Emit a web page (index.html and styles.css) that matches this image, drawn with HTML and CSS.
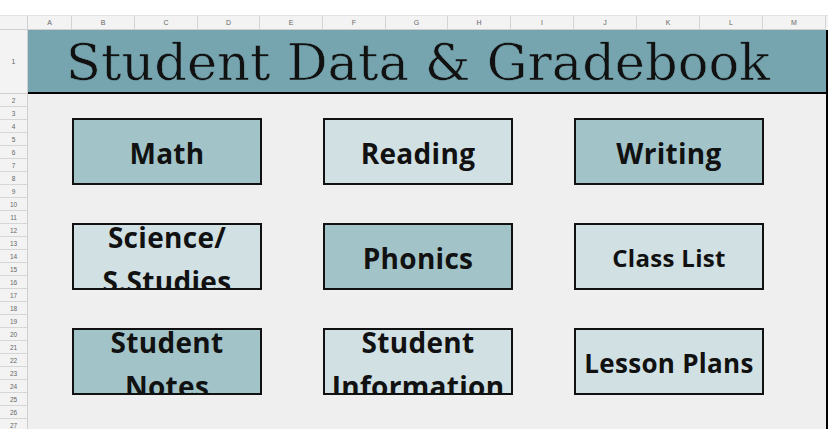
FILE: index.html
```html
<!DOCTYPE html>
<html>
<head>
<meta charset="utf-8">
<link rel="stylesheet" href="styles.css">
</head>
<body>
<div class="top-strip"></div>
<div class="sheet">
  <div class="col-headers">
    <div class="corner"></div>
    <div class="ch ca">A</div>
    <div class="ch">B</div>
    <div class="ch">C</div>
    <div class="ch cn">D</div>
    <div class="ch">E</div>
    <div class="ch">F</div>
    <div class="ch cn">G</div>
    <div class="ch">H</div>
    <div class="ch">I</div>
    <div class="ch">J</div>
    <div class="ch">K</div>
    <div class="ch">L</div>
    <div class="ch">M</div>
  </div>
  <div class="title-row">
    <div class="rh rh-title">1</div>
    <div class="title-cell"><span class="title-text">Student Data &amp; Gradebook</span></div>
  </div>
  <div class="body-row">
    <div class="row-nums">
      <div class="rn">2</div><div class="rn">3</div><div class="rn">4</div><div class="rn">5</div>
      <div class="rn">6</div><div class="rn">7</div><div class="rn">8</div><div class="rn">9</div>
      <div class="rn">10</div><div class="rn">11</div><div class="rn">12</div><div class="rn">13</div>
      <div class="rn">14</div><div class="rn">15</div><div class="rn">16</div><div class="rn">17</div>
      <div class="rn">18</div><div class="rn">19</div><div class="rn">20</div><div class="rn">21</div>
      <div class="rn">22</div><div class="rn">23</div><div class="rn">24</div><div class="rn">25</div>
      <div class="rn">26</div><div class="rn">27</div>
    </div>
    <div class="canvas">
      <div class="btn-grid">
        <div class="btn dark"><div class="lbl">Math</div></div>
        <div class="btn light"><div class="lbl">Reading</div></div>
        <div class="btn dark"><div class="lbl">Writing</div></div>
        <div class="btn light two"><div class="lbl">Science/<br>S.Studies</div></div>
        <div class="btn dark"><div class="lbl">Phonics</div></div>
        <div class="btn light"><div class="lbl small">Class List</div></div>
        <div class="btn dark two"><div class="lbl">Student<br>Notes</div></div>
        <div class="btn light two"><div class="lbl">Student<br>Information</div></div>
        <div class="btn light"><div class="lbl mid">Lesson Plans</div></div>
      </div>
    </div>
  </div>
</div>
</body>
</html>
```

FILE: styles.css
```css
* { box-sizing: border-box; }
html, body { margin: 0; padding: 0; background: #ffffff; }
body { width: 828px; height: 429px; overflow: hidden; font-family: "Liberation Sans", Arial, sans-serif; }

.top-strip { height: 15px; background: #ffffff; }

.sheet { width: 828px; }

.col-headers { display: flex; height: 15px; background: #f3f3f3; border-top: 1px solid #e2e2e2; }
.corner { width: 28px; border-right: 1px solid #cfcfcf; border-bottom: 1px solid #cfcfcf; }
.ch {
  width: 63px; border-right: 1px solid #d4d4d4; border-bottom: 1px solid #cfcfcf;
  font-size: 7px; color: #666; display: flex; align-items: center; justify-content: center;
}
.ch.ca { width: 44px; }
.ch.cn { width: 62px; }

.title-row { display: flex; height: 64px; }
.rh-title {
  width: 28px; background: #f3f3f3; border-right: 1px solid #cfcfcf; border-bottom: 1px solid #cfcfcf;
  font-size: 7px; color: #666; display: flex; align-items: center; justify-content: center;
}
.title-cell {
  width: 800px; height: 64px; background: #76a5af;
  border-bottom: 2px solid #000; border-right: 2px solid #000;
  display: flex; justify-content: center; align-items: flex-start;
  padding-top: 2px; padding-right: 18px; overflow: hidden;
}
.title-text {
  display: inline-block; flex: none; white-space: nowrap;
  font-family: "DejaVu Serif", "Liberation Serif", serif;
  font-size: 51px; line-height: 62px; color: #111;
  -webkit-text-stroke: 0.6px #76a5af;
}

.body-row { display: flex; }
.row-nums { width: 28px; background: #f3f3f3; border-right: 1px solid #cfcfcf; }
.rn {
  height: 13px; border-bottom: 1px solid #d6d6d6;
  font-size: 6.5px; color: #666; display: flex; align-items: center; justify-content: center;
}

.canvas { width: 800px; height: 338px; background: #efefef; border-right: 2px solid #000; }
.btn-grid {
  display: grid; grid-template-columns: 190px 190px 190px; grid-auto-rows: 67px;
  column-gap: 61px; row-gap: 38px; padding-left: 44px; padding-top: 24px;
}
.btn {
  border: 2px solid #111; overflow: hidden; padding-top: 2px;
  display: flex; flex-direction: column; justify-content: center; align-items: center;
}
.btn.two { padding-top: 5px; }
.btn.dark { background: #a2c4c9; }
.btn.light { background: #d0e0e3; }
.lbl {
  flex: none; text-align: center; white-space: nowrap;
  font-family: "Open Sans", "Liberation Sans", sans-serif; font-weight: 700;
  font-size: 28px; line-height: 44px; color: #111; letter-spacing: 0.3px;
}
.lbl.small { font-size: 24px; }
.lbl.mid { font-size: 26px; }
```
